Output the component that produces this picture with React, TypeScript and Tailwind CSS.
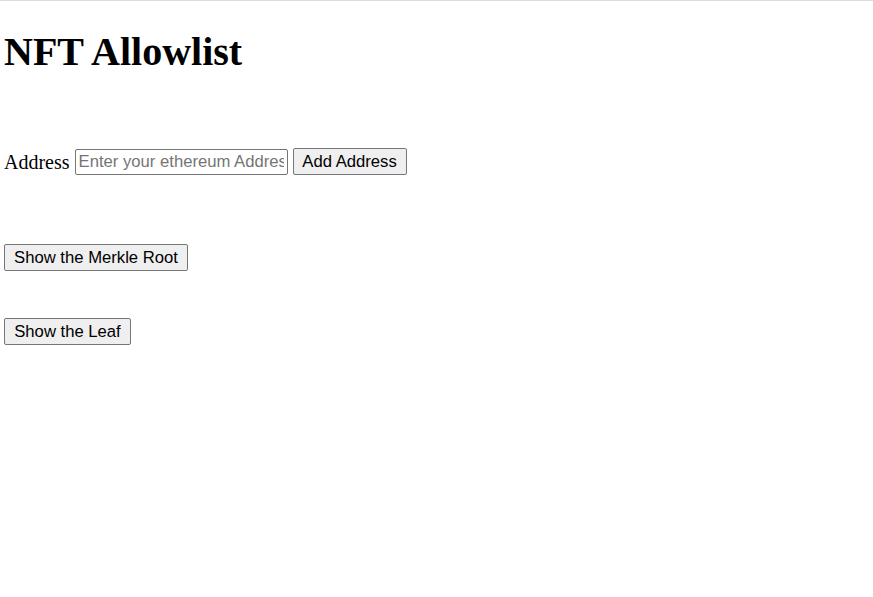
export default function App() {
  return (
    <div className="min-h-[597px] bg-white border-t border-[#dadce0] px-[4px] text-black">
      <h1 className="mt-[28px] text-[40px] leading-[46px] font-bold font-['Liberation_Serif',serif]">
        NFT Allowlist
      </h1>

      <div className="mt-[73px] flex items-center h-[27px]">
        <label className="text-[20px] font-['Liberation_Serif',serif]">Address</label>
        <input
          type="text"
          placeholder="Enter your ethereum Address"
          className="ml-[5px] w-[213px] h-[26px] border border-[#767676] rounded-[2px] px-[3px] text-[16.67px] font-['Liberation_Sans',sans-serif] placeholder:text-[#757575] outline-none"
        />
        <button className="ml-[5px] h-[27px] w-[114px] bg-[#efefef] border border-[#767676] rounded-[2px] text-[16.67px] font-['Liberation_Sans',sans-serif]">
          Add Address
        </button>
      </div>

      <div className="mt-[69px]">
        <button className="h-[27px] w-[184px] bg-[#efefef] border border-[#767676] rounded-[2px] text-[16.67px] font-['Liberation_Sans',sans-serif]">
          Show the Merkle Root
        </button>
      </div>

      <div className="mt-[47px]">
        <button className="h-[27px] w-[127px] bg-[#efefef] border border-[#767676] rounded-[2px] text-[16.67px] font-['Liberation_Sans',sans-serif]">
          Show the Leaf
        </button>
      </div>
    </div>
  );
}
